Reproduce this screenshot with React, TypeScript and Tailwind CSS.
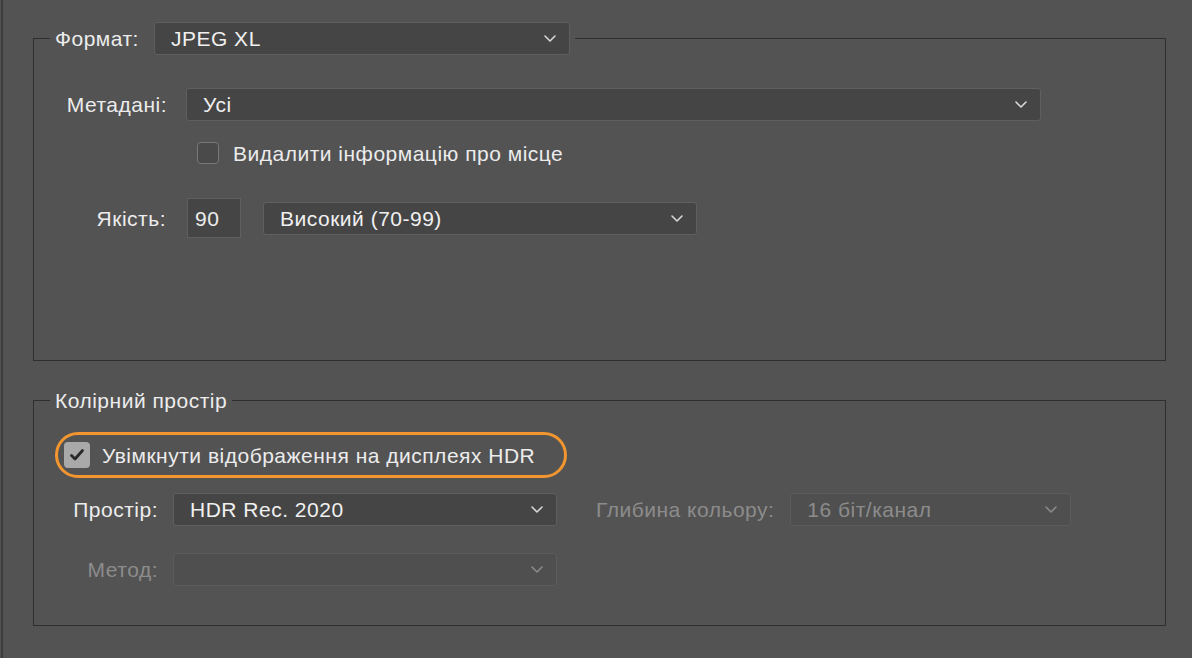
import React from 'react';

const Chevron = ({ dim = false }: { dim?: boolean }) => (
    <svg width="14" height="9" viewBox="0 0 14 9" fill="none" className="shrink-0">
        <path d="M2 2l5 5 5-5" stroke={dim ? '#8a8a8a' : '#d8d8d8'} strokeWidth="1.6" strokeLinecap="round" strokeLinejoin="round" />
    </svg>
);

const Select = ({ value, width, dim = false }: { value: string; width: string; dim?: boolean }) => (
    <div className={`${width} h-[33px] flex items-center justify-between pl-[16px] pr-[12px] rounded-[3px] border ${dim ? 'border-[#5c5c5c] bg-[#4f4f4f] text-[#8c8c8c]' : 'border-[#5f5f5f] bg-[#454545] text-[#f0f0f0]'}`}>
        <span>{value}</span>
        <Chevron dim={dim} />
    </div>
);

export default function App() {
    return (
        <div className="w-[1192px] h-[658px] bg-[#535353] overflow-hidden text-[21px] tracking-[0.5px] leading-none text-[#ececec]" style={{ fontFamily: '"Liberation Sans", Arial, sans-serif' }}>
            <div className="h-full ml-[1px] border-l-2 border-[#3d3d3d] pt-[22px]">
                <fieldset className="ml-[30px] w-[1133px] h-[339px] border border-[#2f2f2f] px-0 pb-0 m-0">
                    <legend className="ml-[16px] px-[5px] flex items-center gap-[15px]">
                        <span>Формат:</span>
                        <Select value="JPEG XL" width="w-[416px]" />
                    </legend>
                    <div className="mt-[33px] flex items-center gap-[19px]">
                        <span className="w-[133px] text-right">Метадані:</span>
                        <Select value="Усі" width="w-[855px]" />
                    </div>
                    <div className="mt-[21px] ml-[163px] flex items-center gap-[14px]">
                        <span className="w-[22px] h-[22px] rounded-[4px] border border-[#787878] bg-[#4a4a4a]" />
                        <span>Видалити інформацію про місце</span>
                    </div>
                    <div className="mt-[34px] flex items-center">
                        <span className="w-[132px] text-right">Якість:</span>
                        <div className="ml-[21px] w-[54px] h-[40px] flex items-center pl-[7px] border border-[#5f5f5f] bg-[#454545]">90</div>
                        <div className="ml-[22px]"><Select value="Високий (70-99)" width="w-[434px]" /></div>
                    </div>
                </fieldset>
                <fieldset className="mt-[29px] ml-[30px] w-[1133px] h-[236px] border border-[#2f2f2f] px-0 pb-0 m-0">
                    <legend className="ml-[16px] px-[5px]">Колірний простір</legend>
                    <div className="mt-[21px] ml-[21px] w-[512px] h-[46px] rounded-full border-[3px] border-[#f3962f] flex items-center pl-[6px] gap-[12px]">
                        <span className="w-[26px] h-[26px] rounded-[4px] bg-[#a9a9a9] flex items-center justify-center">
                            <svg width="18" height="18" viewBox="0 0 18 18" fill="none">
                                <path d="M3.5 9.5l3.5 3.5 7.5-8.5" stroke="#2a2a2a" strokeWidth="2.8" strokeLinecap="round" strokeLinejoin="round" />
                            </svg>
                        </span>
                        <span>Увімкнути відображення на дисплеях HDR</span>
                    </div>
                    <div className="mt-[15px] flex items-center">
                        <span className="w-[124px] text-right">Простір:</span>
                        <div className="ml-[15px]"><Select value="HDR Rec. 2020" width="w-[384px]" /></div>
                        <span className="ml-[39px] text-[#8c8c8c]">Глибина кольору:</span>
                        <div className="ml-[16px]"><Select value="16 біт/канал" width="w-[281px]" dim /></div>
                    </div>
                    <div className="mt-[27px] flex items-center">
                        <span className="w-[124px] text-right text-[#8c8c8c]">Метод:</span>
                        <div className="ml-[15px]"><Select value="" width="w-[384px]" dim /></div>
                    </div>
                </fieldset>
            </div>
        </div>
    );
}
